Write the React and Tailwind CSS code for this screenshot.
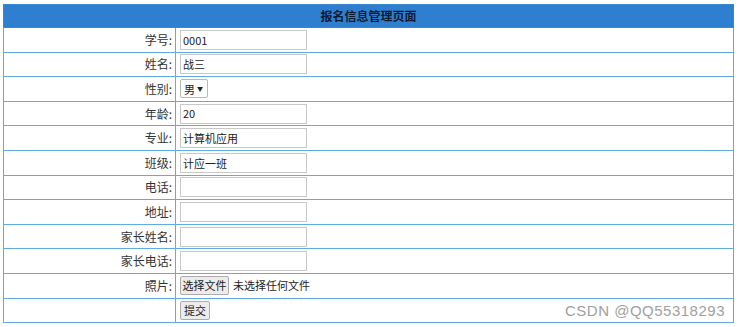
import React from "react";

const rows = [
  ["学号:", "0001"],
  ["姓名:", "战三"],
  ["性别:", "select"],
  ["年龄:", "20"],
  ["专业:", "计算机应用"],
  ["班级:", "计应一班"],
  ["电话:", ""],
  ["地址:", ""],
  ["家长姓名:", ""],
  ["家长电话:", ""],
  ["照片:", "file"],
  ["", "submit"],
];

function Field({ v }) {
  if (v === "select") {
    return (
      <div className="flex h-[19px] w-[28px] items-center justify-between rounded-[2px] border border-[#b8b8b8] bg-white pl-[3px] pr-[4px] text-[11px] text-[#222]">
        <span>男</span>
        <span className="text-[6px]">▼</span>
      </div>
    );
  }
  if (v === "file") {
    return (
      <div className="flex items-center gap-[4px] text-[11px] text-[#222]">
        <div className="flex h-[19px] w-[49px] items-center justify-center rounded-[2px] border border-[#acacac] bg-[#ececec]">选择文件</div>
        <span>未选择任何文件</span>
      </div>
    );
  }
  if (v === "submit") {
    return (
      <div className="flex h-[19px] w-[30px] items-center justify-center rounded-[2px] border border-[#acacac] bg-[#ececec] text-[11px] text-[#222]">
        提交
      </div>
    );
  }
  return (
    <div className="flex h-[20px] w-[127px] items-center border border-[#c8c8c8] bg-white pl-[2px] text-[11px] text-[#222]">
      {v}
    </div>
  );
}

export default function App() {
  return (
    <div
      className="relative h-[327px] w-[740px] bg-white pl-[3px] pt-[4px]"
      style={{ fontFamily: '"Microsoft YaHei", "Noto Sans CJK SC", sans-serif' }}
    >
      <table className="w-[731px] border-collapse">
        <thead>
          <tr>
            <th colSpan={2} className="h-[23px] border border-[#3a86cf] bg-[#2f7fd0] p-0 text-center text-[12px] font-bold text-[#0f1a2e]">
              报名信息管理页面
            </th>
          </tr>
        </thead>
        <tbody>
          {rows.map(([label, v], i) => (
            <tr key={i} className="h-[24.6px]">
              <td className="w-[172px] border border-[#5fade0] p-0 pr-[3px] text-right text-[12px] text-[#333]">{label}</td>
              <td className="border border-[#5fade0] py-0 pl-[4px]">
                <Field v={v} />
              </td>
            </tr>
          ))}
        </tbody>
      </table>
      <div
        className="absolute left-[565px] top-[300px] text-[15px] tracking-[0.5px] text-[#a0a0a0]"
        style={{ fontFamily: '"Liberation Sans", Arial, sans-serif' }}
      >
        CSDN @QQ55318293
      </div>
    </div>
  );
}
